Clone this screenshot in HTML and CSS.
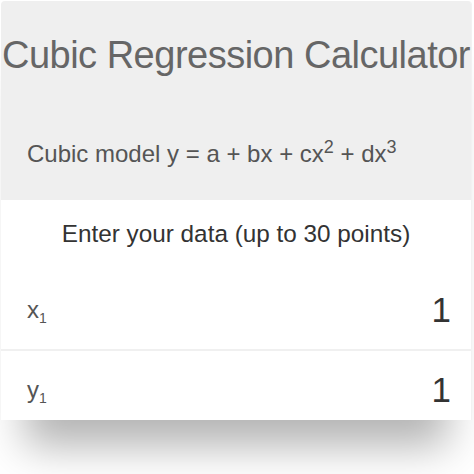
FILE: index.html
```html
<!DOCTYPE html>
<html lang="en">
<head>
<meta charset="utf-8">
<title>Cubic Regression Calculator</title>
<link rel="stylesheet" href="styles.css">
</head>
<body>
<main class="calc">
  <header class="calc-head">
    <h1 class="calc-title">Cubic Regression Calculator</h1>
    <p class="calc-model">Cubic model y = a + bx + cx<sup>2</sup> + dx<sup>3</sup></p>
  </header>
  <section class="calc-data">
    <h2 class="data-heading">Enter your data (up to 30 points)</h2>
    <div class="data-row">
      <span class="data-label">x<sub>1</sub></span>
      <span class="data-value">1</span>
    </div>
    <div class="data-row">
      <span class="data-label">y<sub>1</sub></span>
      <span class="data-value">1</span>
    </div>
  </section>
</main>
</body>
</html>
```
FILE: styles.css
```css
* {
  box-sizing: border-box;
}

html, body {
  margin: 0;
  padding: 0;
  background: #ffffff;
}

body {
  font-family: "Liberation Sans", Arial, sans-serif;
  width: 474px;
  height: 474px;
  overflow: hidden;
}

.calc {
  margin: 1px 0 0 1px;
  width: 471px;
  height: 419px;
  overflow: hidden;
  background: #ffffff;
  border-radius: 4px 4px 0 0;
  border-right: 1px solid #f2f2f2;
  box-shadow: 0 50px 40px -24px rgba(0, 0, 0, 0.3);
  display: flex;
  flex-direction: column;
}

.calc-head {
  background: #efefef;
  padding: 31px 0 32px;
  display: flex;
  flex-direction: column;
}

.calc-title {
  margin: 0;
  font-weight: normal;
  font-size: 38px;
  line-height: 46px;
  letter-spacing: -0.5px;
  color: #666666;
  text-align: center;
  white-space: nowrap;
}

.calc-model {
  margin: 62px 0 0;
  padding-left: 26px;
  font-size: 24px;
  line-height: 28px;
  color: #555555;
}

.calc-model sup {
  font-size: 18px;
  line-height: 0;
  vertical-align: 9px;
}

.calc-data {
  display: flex;
  flex-direction: column;
}

.data-heading {
  margin: 0;
  padding: 20px 0 23px;
  font-weight: normal;
  font-size: 24.3px;
  line-height: 28px;
  color: #333333;
  text-align: center;
}

.data-row {
  flex: none;
  height: 80px;
  padding: 0 20px 0 26px;
  border-bottom: 2px solid #f0f0f0;
  display: flex;
  align-items: center;
  justify-content: space-between;
}

.data-label {
  font-size: 24px;
  line-height: 28px;
  color: #555555;
}

.data-label sub {
  font-size: 14px;
  line-height: 0;
  vertical-align: -5px;
}

.data-value {
  font-size: 35px;
  line-height: 40px;
  color: #333333;
}
```
